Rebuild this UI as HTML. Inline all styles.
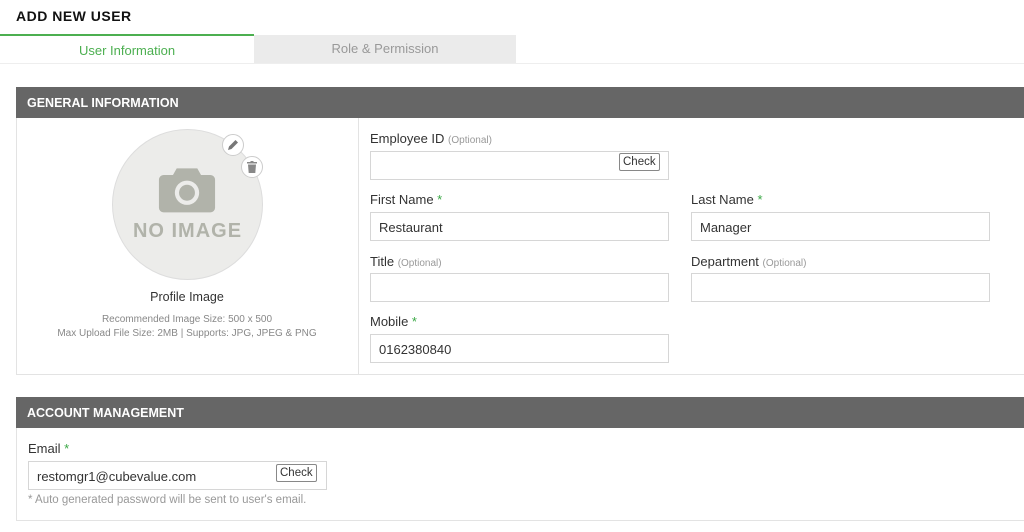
<!DOCTYPE html>
<html><head><style>
*{box-sizing:border-box;margin:0;padding:0}
body{width:1024px;height:532px;background:#fff;font-family:"Liberation Sans",sans-serif;color:#333;position:relative;overflow:hidden}
.a{position:absolute}
.lbl{font-size:13px;color:#333}
.opt{font-size:10px;color:#999}
.req{color:#3aa845}
.inp{position:absolute;height:29px;border:1px solid #d6d6d6;background:#fff;font-size:13px;padding:7px 8px;color:#333}
.chk{position:absolute;border:1px solid #888;border-radius:2px;font-size:11.5px;padding:2px 3px;background:#fff;color:#333}
.hdr{position:absolute;left:16px;width:1008px;height:31px;background:#666;color:#fff;font-weight:bold;font-size:12.5px;padding:9px 11px}
</style></head><body>
<div class="a" style="left:16px;top:8px;font-size:14px;font-weight:bold;color:#111;letter-spacing:.5px">ADD NEW USER</div>
<div class="a" style="left:0;top:34px;width:1024px;height:30px;border-bottom:1px solid #eee"></div>
<div class="a" style="left:0;top:34px;width:254px;height:30px;border-top:2px solid #4caf50;color:#4caf50;font-size:13px;text-align:center;padding-top:7px">User Information</div>
<div class="a" style="left:254px;top:35px;width:262px;height:28px;background:#ebebeb;color:#999;font-size:13px;text-align:center;padding-top:6px">Role &amp; Permission</div>

<div class="hdr" style="top:87px">GENERAL INFORMATION</div>
<div class="a" style="left:16px;top:118px;width:1010px;height:257px;border:1px solid #e3e3e3;border-top:none"></div>
<div class="a" style="left:358px;top:118px;width:1px;height:257px;background:#e3e3e3"></div>
<div class="a" style="left:112px;top:129px;width:151px;height:151px;border-radius:50%;background:#ececea;border:1px solid #ddd"></div>
<svg class="a" style="left:158px;top:165px" width="58" height="48" viewBox="0 0 62 50"><path d="M20 3h22l4 7h10a5 5 0 0 1 5 5v30a5 5 0 0 1-5 5H6a5 5 0 0 1-5-5V15a5 5 0 0 1 5-5h10z" fill="#b1b3aa"/><circle cx="31" cy="29" r="13" fill="#ececea"/><circle cx="31" cy="29" r="8.5" fill="#b1b3aa"/></svg>
<div class="a" style="left:112px;top:220px;width:151px;text-align:center;font-weight:bold;font-size:20px;color:#b1b3aa;letter-spacing:1px">NO IMAGE</div>
<div class="a" style="left:222px;top:134px;width:22px;height:22px;border-radius:50%;background:#fff;border:1px solid #ccc"></div>
<svg class="a" style="left:227px;top:139px" width="12" height="12" viewBox="0 0 12 12"><path d="M1 11l1-3.5L8.5 1 11 3.5 4.5 10z" fill="#777"/></svg>
<div class="a" style="left:241px;top:156px;width:22px;height:22px;border-radius:50%;background:#fff;border:1px solid #ccc"></div>
<svg class="a" style="left:247px;top:161px" width="10" height="12" viewBox="0 0 10 12"><rect x="0" y="1" width="10" height="1.5" fill="#888"/><rect x="3.5" y="0" width="3" height="1.5" fill="#888"/><path d="M1 3.5h8l-.7 8.5H1.7z" fill="#888"/></svg>
<div class="a" style="left:16px;top:290px;width:342px;text-align:center;font-size:12.5px;color:#333">Profile Image</div>
<div class="a" style="left:16px;top:314px;width:342px;text-align:center;font-size:10px;color:#888">Recommended Image Size: 500 x 500</div>
<div class="a" style="left:16px;top:328px;width:342px;text-align:center;font-size:10px;color:#888">Max Upload File Size: 2MB | Supports: JPG, JPEG &amp; PNG</div>

<div class="a lbl" style="left:370px;top:131px">Employee ID <span class="opt">(Optional)</span></div>
<div class="inp" style="left:370px;top:151px;width:299px"></div>
<div class="chk" style="left:619px;top:153px">Check</div>
<div class="a lbl" style="left:370px;top:192px">First Name <span class="req">*</span></div>
<div class="inp" style="left:370px;top:212px;width:299px">Restaurant</div>
<div class="a lbl" style="left:691px;top:192px">Last Name <span class="req">*</span></div>
<div class="inp" style="left:691px;top:212px;width:299px">Manager</div>
<div class="a lbl" style="left:370px;top:254px">Title <span class="opt">(Optional)</span></div>
<div class="inp" style="left:370px;top:273px;width:299px"></div>
<div class="a lbl" style="left:691px;top:254px">Department <span class="opt">(Optional)</span></div>
<div class="inp" style="left:691px;top:273px;width:299px"></div>
<div class="a lbl" style="left:370px;top:314px">Mobile <span class="req">*</span></div>
<div class="inp" style="left:370px;top:334px;width:299px">0162380840</div>

<div class="hdr" style="top:397px">ACCOUNT MANAGEMENT</div>
<div class="a" style="left:16px;top:428px;width:1010px;height:93px;border:1px solid #e3e3e3;border-top:none"></div>
<div class="a lbl" style="left:28px;top:441px">Email <span class="req">*</span></div>
<div class="inp" style="left:28px;top:461px;width:299px">restomgr1@cubevalue.com</div>
<div class="chk" style="left:276px;top:464px">Check</div>
<div class="a" style="left:28px;top:494px;font-size:11.5px;color:#999">* Auto generated password will be sent to user's email.</div>
</body></html>
